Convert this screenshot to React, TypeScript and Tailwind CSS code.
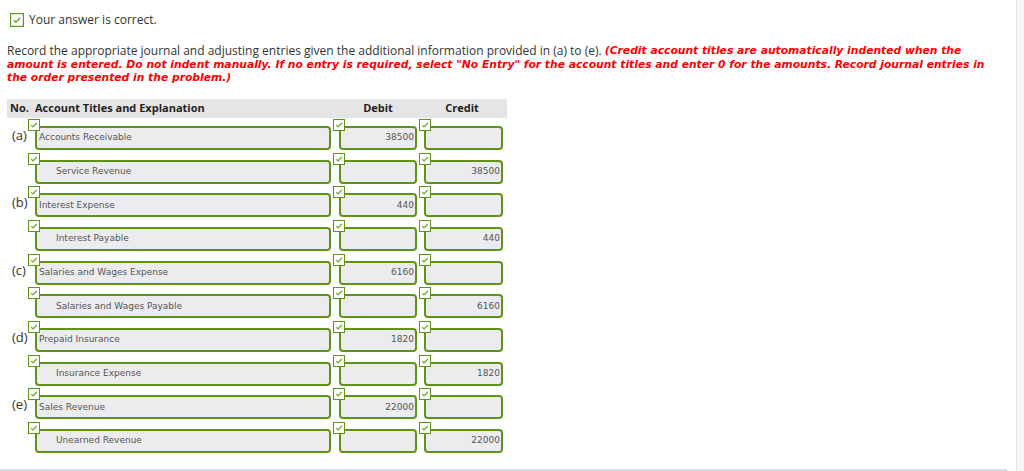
import React from "react";

const GREEN = "#5f9419";

function Check({ size = 12 }: { size?: number }) {
  return (
    <svg width={size} height={size} viewBox="0 0 12 12" className="block">
      <rect x="0.5" y="0.5" width="11" height="11" fill="#fff" stroke={GREEN} strokeWidth="1" />
      <path d="M3.2 6.2 L5 8 L8.8 4" fill="none" stroke="#6aa62a" strokeWidth="1.2" />
    </svg>
  );
}

type Row = { label?: string; account: string; debit?: string; credit?: string; indent?: boolean };

const rows: Row[] = [
  { label: "(a)", account: "Accounts Receivable", debit: "38500" },
  { account: "Service Revenue", credit: "38500", indent: true },
  { label: "(b)", account: "Interest Expense", debit: "440" },
  { account: "Interest Payable", credit: "440", indent: true },
  { label: "(c)", account: "Salaries and Wages Expense", debit: "6160" },
  { account: "Salaries and Wages Payable", credit: "6160", indent: true },
  { label: "(d)", account: "Prepaid Insurance", debit: "1820" },
  { account: "Insurance Expense", credit: "1820", indent: true },
  { label: "(e)", account: "Sales Revenue", debit: "22000" },
  { account: "Unearned Revenue", credit: "22000", indent: true },
];

function Field({ width, text, align, indent, off }: { width: string; text?: string; align: "left" | "right"; indent?: boolean; off: string }) {
  return (
    <div className={`relative pt-[7px] ${width}`}>
      <div className={`absolute top-0 ${off}`}>
        <Check />
      </div>
      <div
        className={`h-[24px] w-full border-2 border-[#5f9419] rounded-[4px] bg-[#ececee] flex items-center text-[9px] text-[#555] ${
          align === "right" ? "justify-end pr-[1px]" : indent ? "pl-[19px]" : "pl-[2px]"
        }`}
        style={{ fontFamily: '"DejaVu Sans", Verdana, sans-serif' }}
      >
        {text}
      </div>
    </div>
  );
}

export default function App() {
  return (
    <div className="w-[1024px] h-[471px] flex bg-white overflow-hidden" style={{ fontFamily: '"Open Sans", "Segoe UI", sans-serif' }}>
      <div className="w-[1017px] h-full border-r border-[#dfe3e8] flex flex-col relative">
        <div className="pl-[10px] pt-[13px] flex items-center gap-[5px] text-[12px] text-[#333] leading-[14px]">
          <Check size={14} />
          <span>Your answer is correct.</span>
        </div>
        <p className="pl-[7px] pr-[2px] mt-[17px] text-[12px] leading-[13.5px] text-[#333]">
          Record the appropriate journal and adjusting entries given the additional information provided in (a) to (e).{" "}
          <span
            className="text-[#ff0000] font-bold italic leading-[13.5px] align-top"
            style={{ fontFamily: '"DejaVu Sans", Verdana, sans-serif', fontSize: "10.75px" }}
          >
            (Credit account titles are automatically indented when the
            <br />
            amount is entered. Do not indent manually. If no entry is required, select "No Entry" for the account titles and enter 0 for the amounts. Record journal entries in
            <br />
            the order presented in the problem.)
          </span>
        </p>
        <div className="ml-[7px] mt-[14px] w-[500px] h-[19px] bg-[#e5e5e5] flex items-center text-[11px] font-bold text-[#222]">
          <span className="w-[28px] pl-[3px]">No.</span>
          <span className="w-[304px]">Account Titles and Explanation</span>
          <span className="w-[78px] text-center">Debit</span>
          <span className="w-[90px] text-center">Credit</span>
        </div>
        <div className="ml-[7px] mt-[1.5px] flex flex-col">
          {rows.map((r, i) => (
            <div key={i} className="h-[33.67px] flex items-start">
              <div className="w-[28px] pl-[5px] pt-[7px] text-[13px] text-[#333] leading-[18px]">{r.label}</div>
              <Field width="w-[296px]" text={r.account} align="left" indent={r.indent} off="left-[-7px]" />
              <div className="w-[8px]" />
              <Field width="w-[78px]" text={r.debit} align="right" off="left-[-6px]" />
              <div className="w-[7px]" />
              <Field width="w-[79px]" text={r.credit} align="right" off="left-[-5px]" />
            </div>
          ))}
        </div>
        <div className="absolute left-0 bottom-0 w-[1007px] h-[2px] bg-[#d6dce4]" />
      </div>
      <div className="flex-1 bg-[#f5f8fb]" />
    </div>
  );
}
